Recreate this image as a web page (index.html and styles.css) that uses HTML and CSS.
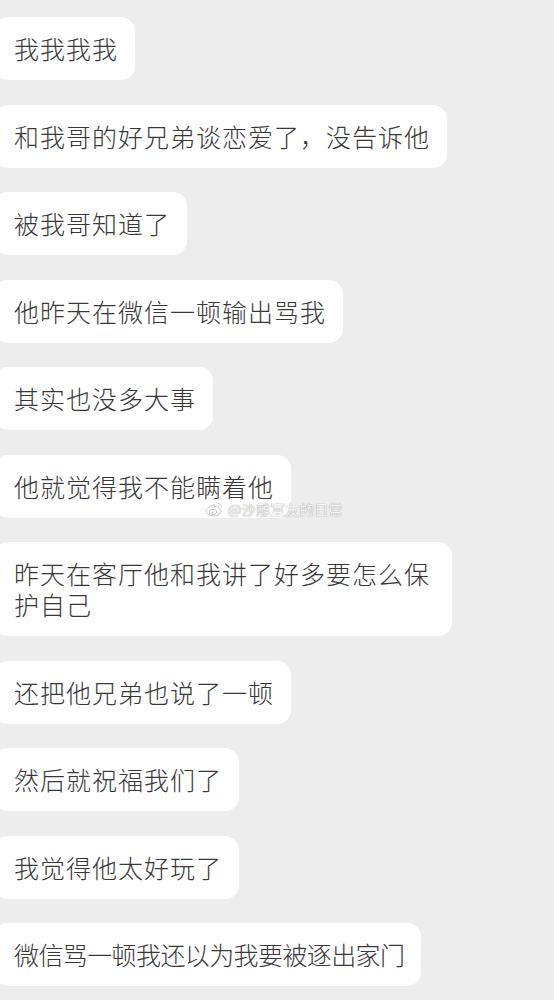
FILE: index.html
```html
<!DOCTYPE html>
<html lang="zh-CN">
<head>
<meta charset="utf-8">
<title>聊天记录</title>
<link rel="stylesheet" href="styles.css">
</head>
<body>
<div class="chat">
  <div class="bubble">我我我我</div>
  <div class="bubble">和我哥的好兄弟谈恋爱了，没告诉他</div>
  <div class="bubble">被我哥知道了</div>
  <div class="bubble">他昨天在微信一顿输出骂我</div>
  <div class="bubble">其实也没多大事</div>
  <div class="bubble">他就觉得我不能瞒着他</div>
  <div class="bubble">昨天在客厅他和我讲了好多要怎么保护自己</div>
  <div class="bubble">还把他兄弟也说了一顿</div>
  <div class="bubble">然后就祝福我们了</div>
  <div class="bubble">我觉得他太好玩了</div>
  <div class="bubble bubble-tight">微信骂一顿我还以为我要被逐出家门</div>
</div>
<div class="watermark">
  <svg class="wb-logo" width="18" height="15" viewBox="0 0 18 15">
    <path d="M7.5 3.2C4 4.3 1.2 7 1.2 9.4c0 2.6 3.3 4.5 7.3 4.5 4.3 0 7.6-2.2 7.6-4.6 0-1.5-1.4-2.3-2.5-2.6.5-1.3.3-2.3-.6-2.6-1-.3-2.4.2-3.3.7.3-1 .1-1.9-.5-2.1-.5-.2-1.1 0-1.7.5z" fill="#fff" stroke="#c4c4c4" stroke-width="1"/>
    <ellipse cx="8" cy="10" rx="3.8" ry="2.6" fill="none" stroke="#c4c4c4" stroke-width="1"/>
    <circle cx="7.4" cy="10.2" r="1" fill="#c4c4c4"/>
    <path d="M12.6 1.4a3.6 3.6 0 0 1 3.8 3.6" fill="none" stroke="#c4c4c4" stroke-width="1"/>
  </svg>
  <span class="wm-text">@沙雕室友的日常</span>
</div>
</body>
</html>
```

FILE: styles.css
```css
html, body {
  margin: 0;
  padding: 0;
}
body {
  width: 554px;
  height: 1000px;
  overflow: hidden;
  background: #ededed;
  position: relative;
  font-family: "Noto Sans CJK SC", "Noto Sans", sans-serif;
}
.chat {
  display: flex;
  flex-direction: column;
  align-items: flex-start;
  gap: 24.5px;
  padding-top: 17px;
}
.bubble {
  margin-left: -6px;
  box-sizing: border-box;
  max-width: 458px;
  padding: 16px 17px 16px 20px;
  background: #ffffff;
  border-radius: 14px;
  font-size: 25px;
  font-weight: 300;
  line-height: 31px;
  letter-spacing: 1px;
  color: #383838;
}
.bubble-tight {
  letter-spacing: -0.6px;
}
.watermark {
  position: absolute;
  left: 205px;
  top: 500px;
  display: flex;
  align-items: center;
  gap: 5px;
}
.wm-text {
  font-size: 14px;
  line-height: 18px;
  color: #f4f4f4;
  letter-spacing: 0.5px;
  text-shadow: 0 0 1px #aaaaaa, 0 0 1px #aaaaaa;
}
```
